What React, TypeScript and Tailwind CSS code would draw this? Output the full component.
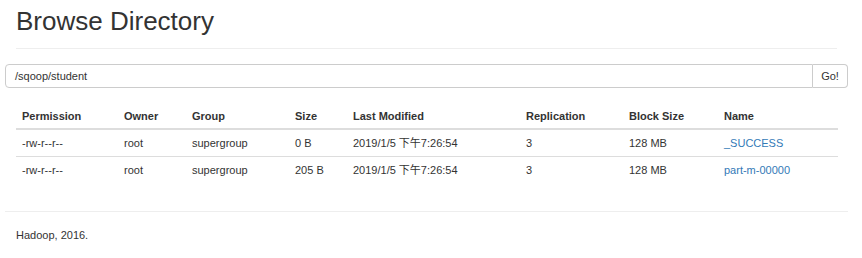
const rows = [
  {
    permission: '-rw-r--r--',
    owner: 'root',
    group: 'supergroup',
    size: '0 B',
    modified: '2019/1/5 下午7:26:54',
    replication: '3',
    blockSize: '128 MB',
    name: '_SUCCESS',
  },
  {
    permission: '-rw-r--r--',
    owner: 'root',
    group: 'supergroup',
    size: '205 B',
    modified: '2019/1/5 下午7:26:54',
    replication: '3',
    blockSize: '128 MB',
    name: 'part-m-00000',
  },
];

const columns = [
  { label: 'Permission', w: 'w-[102px]' },
  { label: 'Owner', w: 'w-[68px]' },
  { label: 'Group', w: 'w-[103px]' },
  { label: 'Size', w: 'w-[58px]' },
  { label: 'Last Modified', w: 'w-[173px]' },
  { label: 'Replication', w: 'w-[103px]' },
  { label: 'Block Size', w: 'w-[95px]' },
  { label: 'Name', w: 'w-[120px]' },
];

export default function App() {
  return (
    <div
      className="w-[862px] h-[258px] bg-white text-[#333] pl-[5px] pr-[14px] text-[11px]"
      style={{ fontFamily: '"Liberation Sans", Arial, "Noto Sans CJK SC", sans-serif' }}
    >
      <div className="px-[11px]">
        <h1 className="text-[26px] leading-none pt-[8px] pb-[14px] text-[#333]">Browse Directory</h1>
        <div className="border-t border-[#eee]" />
      </div>

      <div className="mt-[15px] flex h-[24px]">
        <div className="flex-1 border border-[#ccc] rounded-l-[4px] flex items-center px-[9px]">
          /sqoop/student
        </div>
        <button className="w-[35px] border border-l-0 border-[#ccc] rounded-r-[4px] bg-white flex items-center justify-center">
          Go!
        </button>
      </div>

      <table className="mx-[11px] mt-[17px] border-collapse table-fixed w-[822px]">
        <thead>
          <tr className="border-b-2 border-[#ddd] h-[24px]">
            {columns.map((c) => (
              <th key={c.label} className={`${c.w} text-left font-bold px-[6px] pb-[1px]`}>
                {c.label}
              </th>
            ))}
          </tr>
        </thead>
        <tbody>
          {rows.map((r, i) => (
            <tr key={r.name} className={`h-[27px] ${i === 0 ? 'border-b border-[#ddd]' : ''}`}>
              <td className="px-[6px]">{r.permission}</td>
              <td className="px-[6px]">{r.owner}</td>
              <td className="px-[6px]">{r.group}</td>
              <td className="px-[6px]">{r.size}</td>
              <td className="px-[6px]">{r.modified}</td>
              <td className="px-[6px]">{r.replication}</td>
              <td className="px-[6px]">{r.blockSize}</td>
              <td className="px-[6px]">
                <a className="text-[#337ab7]">{r.name}</a>
              </td>
            </tr>
          ))}
        </tbody>
      </table>

      <div className="mt-[28px] border-t border-[#eee]" />
      <div className="px-[11px] pt-[15px]">Hadoop, 2016.</div>
    </div>
  );
}
